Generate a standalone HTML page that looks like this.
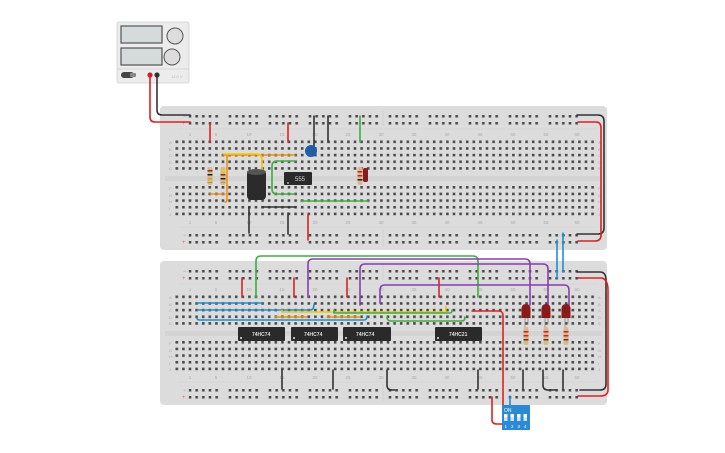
<!DOCTYPE html>
<html><head><meta charset="utf-8"><style>
html,body{margin:0;padding:0;background:#fff;width:725px;height:453px;overflow:hidden}
svg{display:block;font-family:"Liberation Sans",sans-serif}
</style></head><body>
<svg width="725" height="453" viewBox="0 0 725 453" xmlns="http://www.w3.org/2000/svg">
<defs>
<pattern id="g" patternUnits="userSpaceOnUse" x="175.5" y="140.5" width="6.6" height="6.65"><rect x="0" y="0" width="2.6" height="2.6" fill="#4a4a4a"/></pattern>
<pattern id="r" patternUnits="userSpaceOnUse" x="188.7" y="115" width="40" height="7"><rect x="0" y="0" width="2.6" height="2.6" fill="#4a4a4a"/><rect x="6.67" y="0" width="2.6" height="2.6" fill="#4a4a4a"/><rect x="13.33" y="0" width="2.6" height="2.6" fill="#4a4a4a"/><rect x="20" y="0" width="2.6" height="2.6" fill="#4a4a4a"/><rect x="26.67" y="0" width="2.6" height="2.6" fill="#4a4a4a"/></pattern>
<g id="board">
<rect x="160" y="106" width="447" height="144" rx="4" fill="#dcdcdc"/>
<line x1="178" y1="129" x2="597" y2="129" stroke="#cfcfcf" stroke-width="0.6"/>
<line x1="178" y1="227" x2="597" y2="227" stroke="#cfcfcf" stroke-width="0.6"/>
<rect x="165" y="176" width="437" height="5" fill="#d3d3d3"/>
<line x1="383" y1="110" x2="383" y2="126" stroke="#c8c8c8" stroke-width="0.6"/>
<line x1="383" y1="229" x2="383" y2="246" stroke="#c8c8c8" stroke-width="0.6"/>
<rect x="188.7" y="115" width="390" height="2.6" fill="url(#r)"/>
<rect x="188.7" y="122" width="390" height="2.6" fill="url(#r)"/>
<rect x="188.7" y="234" width="390" height="2.6" fill="url(#r)"/>
<rect x="188.7" y="241" width="390" height="2.6" fill="url(#r)"/>
<rect x="175.5" y="140.5" width="422" height="33" fill="url(#g)"/>
<g transform="translate(0,45.5)"><rect x="175.5" y="140.5" width="422" height="33" fill="url(#g)"/></g>
<text x="183" y="118" font-size="6" fill="#7aa0d0">−</text>
<text x="182" y="125" font-size="6" fill="#e07070">+</text>
<text x="183" y="237" font-size="6" fill="#7aa0d0">−</text>
<text x="182" y="244" font-size="6" fill="#e07070">+</text>
<g font-size="4.5" fill="#aaa" text-anchor="middle">
<text x="190" y="136">1</text><text x="216" y="136">5</text><text x="249" y="136">10</text><text x="282" y="136">15</text><text x="315" y="136">20</text><text x="348" y="136">25</text><text x="381" y="136">30</text><text x="414" y="136">35</text><text x="447" y="136">40</text><text x="480" y="136">45</text><text x="513" y="136">50</text><text x="546" y="136">55</text><text x="577" y="136">60</text>
<text x="190" y="224">1</text><text x="216" y="224">5</text><text x="249" y="224">10</text><text x="282" y="224">15</text><text x="315" y="224">20</text><text x="348" y="224">25</text><text x="381" y="224">30</text><text x="414" y="224">35</text><text x="447" y="224">40</text><text x="480" y="224">45</text><text x="513" y="224">50</text><text x="546" y="224">55</text><text x="577" y="224">60</text>
</g>
<g font-size="4" fill="#aaa">
<text x="169" y="144">A</text><text x="169" y="151">B</text><text x="169" y="157">C</text><text x="169" y="164">D</text><text x="169" y="170">E</text>
<text x="169" y="190">F</text><text x="169" y="197">G</text><text x="169" y="203">H</text><text x="169" y="210">I</text><text x="169" y="216">J</text>
<text x="598" y="144">A</text><text x="598" y="151">B</text><text x="598" y="157">C</text><text x="598" y="164">D</text><text x="598" y="170">E</text>
<text x="598" y="190">F</text><text x="598" y="197">G</text><text x="598" y="203">H</text><text x="598" y="210">I</text><text x="598" y="216">J</text>
</g>
</g>
</defs>

<use href="#board"/>
<use href="#board" transform="translate(0,155)"/>

<!-- power supply -->
<rect x="117" y="22" width="72" height="61" rx="2" fill="#ececec" stroke="#cfcfcf" stroke-width="0.8"/>
<rect x="121" y="26" width="41" height="17" fill="#d5dbdb" stroke="#555" stroke-width="1.2"/>
<rect x="121" y="48" width="41" height="17" fill="#d5dbdb" stroke="#555" stroke-width="1.2"/>
<circle cx="175" cy="36" r="8" fill="#ddd" stroke="#555" stroke-width="1"/>
<circle cx="172" cy="57" r="8" fill="#ddd" stroke="#555" stroke-width="1"/>
<line x1="117" y1="69" x2="189" y2="69" stroke="#cfcfcf" stroke-width="0.8"/>
<rect x="121" y="72" width="13" height="6" rx="3" fill="#444"/>
<rect x="130" y="73" width="6" height="4" rx="1" fill="#888"/>
<circle cx="150" cy="75" r="2.6" fill="#c22"/>
<circle cx="157" cy="75" r="2.6" fill="#333"/>
<text x="171" y="78" font-size="4" fill="#bbb">12.0 V</text>

<g fill="none" stroke-linecap="round" stroke-linejoin="round" stroke-width="1.6">
<path d="M150 77 V117 Q150 122 155 122 H190" stroke="#e02020"/>
<path d="M157 77 V110 Q157 115 162 115 H190" stroke="#333"/>
<path d="M210 123 V142" stroke="#e02020"/>
<path d="M288 123 V142" stroke="#e02020"/>
<path d="M314 116 V150" stroke="#333"/>
<path d="M328 116 V142" stroke="#333"/>
<path d="M360 116 V142" stroke="#3bb03b"/>
<path d="M223 155 H295" stroke="#f0900a"/>
<path d="M227 155 V200 Q227 202 225 202" stroke="#f0900a"/>
<path d="M210 194 H225" stroke="#f0900a"/>
<path d="M224 154 H256 Q262 154 262 160 V173" stroke="#f5c800"/>
<path d="M295 161 H277 Q272 161 272 166 V189 Q272 194 277 194 H295" stroke="#3bb03b"/>
<path d="M301 201 H368" stroke="#3bb03b"/>
<path d="M262 207 H296" stroke="#333"/>
<path d="M249 207 V233" stroke="#333"/>
<path d="M288 213 V234" stroke="#333"/>
<path d="M308 214 V240" stroke="#e02020"/>
<path d="M577 115 H598 Q604 115 604 121 V228 Q604 234 598 234 H577" stroke="#333"/>
<path d="M578 122 H596 Q601 122 601 128 V235 Q601 241 595 241 H578" stroke="#e02020"/>
<path d="M563 233 V272" stroke="#1e90d0"/>
<path d="M557 240 V278" stroke="#1e90d0"/>
<path d="M577 272 H600 Q606 272 606 280 V384 Q606 390 600 390 H580" stroke="#333"/>
<path d="M578 278 H602 Q608 280 608 290 V390 Q608 396 600 396 H578" stroke="#e02020"/>
<path d="M242 278 V297" stroke="#e02020"/>
<path d="M294 278 V297" stroke="#e02020"/>
<path d="M347 278 V297" stroke="#e02020"/>
<path d="M439 278 V297" stroke="#e02020"/>
<path d="M256 297 V261 Q256 256 261 256 H473 Q478 256 478 261 V297" stroke="#3bb03b"/>
<path d="M308 297 V264 Q308 259 313 259 H525 Q530 259 530 264 V305" stroke="#8a3cb0"/>
<path d="M360 305 V269 Q360 264 365 264 H543 Q548 264 548 269 V305" stroke="#8a3cb0"/>
<path d="M380 303 V290 Q380 285 385 285 H564 Q569 285 569 290 V305" stroke="#8a3cb0"/>
<path d="M197 303 H262" stroke="#1e90d0"/>
<path d="M197 310 H310 Q314 310 314 304" stroke="#1e90d0"/>
<path d="M197 318 Q197 320 200 320 H364 Q367 320 367 316" stroke="#1e90d0"/>
<path d="M282 310 V312 H445 Q446 312 446 306" stroke="#f5c800"/>
<path d="M275 317 H307" stroke="#f0900a"/>
<path d="M327 317 H360" stroke="#f0900a"/>
<path d="M334 310 V313 H450 Q452 313 452 310" stroke="#3bb03b"/>
<path d="M387 317 Q387 321 391 321 H462 Q465 321 465 317" stroke="#3bb03b"/>
<path d="M472 311 H499 Q503 311 503 316 V408" stroke="#e02020"/>
<path d="M492 397 V420 Q492 424 497 424 H503" stroke="#e02020"/>
<path d="M510 396 V406" stroke="#1e90d0"/>
<path d="M282 370 V389" stroke="#333"/>
<path d="M333 370 V389" stroke="#333"/>
<path d="M387 370 V385 Q387 390 392 390 H395" stroke="#333"/>
<path d="M478 370 V389" stroke="#333"/>
<path d="M523 370 V389" stroke="#333"/>
<path d="M563 370 V389" stroke="#333"/>
<path d="M543 370 V385 Q543 390 548 390 H556" stroke="#333"/>
</g>

<circle cx="311" cy="151" r="6" fill="#1e5fa8"/>
<g>
<rect x="207.5" y="167" width="5" height="18" rx="2" fill="#d9b98a"/>
<rect x="207.5" y="170" width="5" height="1.5" fill="#6b3a1a"/><rect x="207.5" y="174" width="5" height="1.5" fill="#222"/><rect x="207.5" y="178" width="5" height="1.5" fill="#e8a000"/><rect x="207.5" y="182" width="5" height="1" fill="#b8963a"/>
<rect x="220.5" y="167" width="5" height="18" rx="2" fill="#d9b98a"/>
<rect x="220.5" y="170" width="5" height="1.5" fill="#f0d000"/><rect x="220.5" y="174" width="5" height="1.5" fill="#6b3a1a"/><rect x="220.5" y="178" width="5" height="1.5" fill="#222"/><rect x="220.5" y="182" width="5" height="1" fill="#b8963a"/>
</g>
<rect x="247" y="170" width="19" height="30" rx="4" fill="#2b2b2b"/>
<ellipse cx="256.5" cy="172" rx="9.5" ry="3" fill="#555"/>
<rect x="284" y="172" width="28" height="13" rx="1" fill="#2a2a2a"/>
<text x="295" y="181" font-size="6" fill="#ddd">555</text>
<circle cx="288" cy="183" r="1" fill="#aaa"/>
<rect x="357.5" y="167" width="5" height="18" rx="2" fill="#d9b98a"/>
<rect x="357.5" y="171" width="5" height="1.5" fill="#c22"/><rect x="357.5" y="175" width="5" height="1.5" fill="#c22"/><rect x="357.5" y="179" width="5" height="1.5" fill="#222"/>
<rect x="363" y="168" width="5" height="14" rx="2" fill="#8b1a1a"/>

<g font-size="5" fill="#ddd" font-weight="bold">
<rect x="238" y="327" width="47" height="14" rx="1" fill="#2a2a2a"/><text x="252" y="336">74HC74</text>
<rect x="291" y="327" width="47" height="14" rx="1" fill="#2a2a2a"/><text x="304" y="336">74HC74</text>
<rect x="343" y="327" width="48" height="14" rx="1" fill="#2a2a2a"/><text x="356" y="336">74HC74</text>
<rect x="435" y="327" width="47" height="14" rx="1" fill="#2a2a2a"/><text x="449" y="336">74HC21</text>
</g>
<g fill="#bbb"><rect x="240" y="337" width="2" height="2"/><rect x="293" y="337" width="2" height="2"/><rect x="345" y="337" width="2" height="2"/><rect x="437" y="337" width="2" height="2"/></g>

<g>
<path d="M521.5 318 V309 Q521.5 304 526 304 Q530.5 304 530.5 309 V318 Z" fill="#8b1a1a"/>
<path d="M541.5 318 V309 Q541.5 304 546 304 Q550.5 304 550.5 309 V318 Z" fill="#8b1a1a"/>
<path d="M561.5 318 V309 Q561.5 304 566 304 Q570.5 304 570.5 309 V318 Z" fill="#8b1a1a"/>
<g stroke="#888" stroke-width="0.8"><path d="M525 318 V327M528 318 V324M545 318 V327M548 318 V324M565 318 V327M568 318 V324"/></g>
<rect x="523.5" y="327" width="5" height="18" rx="2" fill="#d9b98a"/><rect x="523.5" y="331" width="5" height="1.5" fill="#c22"/><rect x="523.5" y="335" width="5" height="1.5" fill="#c22"/><rect x="523.5" y="339" width="5" height="1.5" fill="#6b3a1a"/>
<rect x="543.5" y="327" width="5" height="18" rx="2" fill="#d9b98a"/><rect x="543.5" y="331" width="5" height="1.5" fill="#c22"/><rect x="543.5" y="335" width="5" height="1.5" fill="#c22"/><rect x="543.5" y="339" width="5" height="1.5" fill="#6b3a1a"/>
<rect x="563.5" y="327" width="5" height="18" rx="2" fill="#d9b98a"/><rect x="563.5" y="331" width="5" height="1.5" fill="#c22"/><rect x="563.5" y="335" width="5" height="1.5" fill="#c22"/><rect x="563.5" y="339" width="5" height="1.5" fill="#6b3a1a"/>
</g>

<rect x="502" y="405" width="28" height="25" fill="#2b8ad6"/>
<text x="504" y="412" font-size="5" fill="#fff">ON</text>
<g fill="#fff"><rect x="504" y="414" width="3.5" height="7"/><rect x="510.5" y="414" width="3.5" height="7"/><rect x="517" y="414" width="3.5" height="7"/><rect x="523.5" y="414" width="3.5" height="7"/></g>
<g fill="#cfe6f8"><rect x="504" y="417" width="3.5" height="4"/><rect x="510.5" y="417" width="3.5" height="4"/><rect x="517" y="417" width="3.5" height="4"/><rect x="523.5" y="417" width="3.5" height="4"/></g>
<g font-size="4.5" fill="#fff"><text x="504.5" y="428">1</text><text x="511" y="428">2</text><text x="517.5" y="428">3</text><text x="524" y="428">4</text></g>
</svg>
</body></html>
